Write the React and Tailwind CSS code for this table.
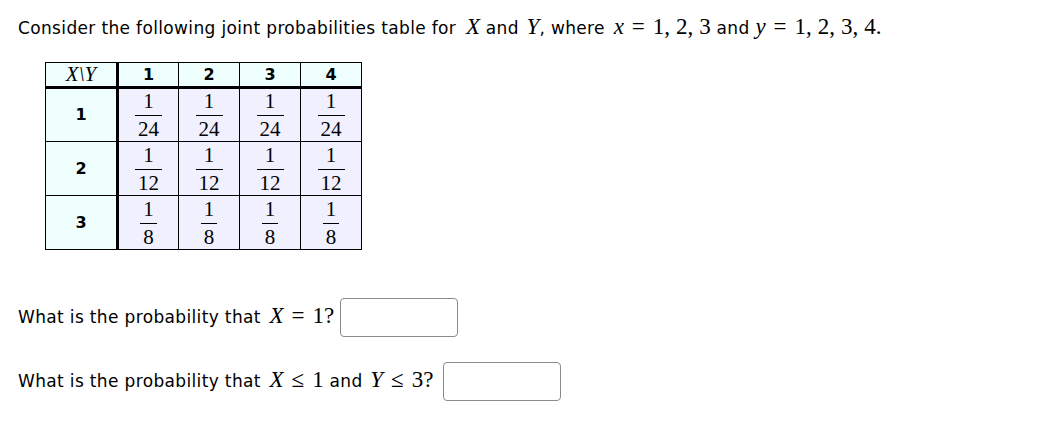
import React from 'react';

const serif = "font-['Liberation_Serif','DejaVu_Serif',serif]";

const Var = ({ children, className = '' }) => (
  <span className={`${serif} italic text-[23px] leading-none tracking-normal ${className}`}>{children}</span>
);

// math run: relations get MathJax-like spacing, commas a thin space
const Rel = ({ children }) => (
  <span className={`${serif} text-[23px] leading-none tracking-normal mx-[8px]`}>{children}</span>
);

const List = ({ items, end = '' }) => (
  <span className={`${serif} text-[23px] leading-none tracking-normal`}>
    {items.map((n, i) => (
      <span key={i}>
        {n}
        {i < items.length - 1 ? <span className="mr-[6px]">,</span> : null}
      </span>
    ))}
    {end}
  </span>
);

const Frac = ({ den }) => (
  <span className={`${serif} inline-flex flex-col items-center text-[21px] leading-[21px]`}>
    <span>1</span>
    <span className="h-px w-full bg-black my-[3px]" />
    <span className="px-[3px]">{den}</span>
  </span>
);

const rows = [
  { x: 1, den: '24' },
  { x: 2, den: '12' },
  { x: 3, den: '8' },
];

export default function App() {
  return (
    <div className="w-[1043px] h-[430px] bg-white text-black font-['DejaVu_Sans','Verdana',sans-serif] text-[17px] tracking-[0.35px] pl-[18px] pt-[15px]">
      {/* ── PROMPT ─────────────────────────────────────────── */}
      <p className="h-[26px] leading-[26px] whitespace-nowrap">
        Consider the following joint probabilities table for <Var className="ml-[4px]">X</Var> and{' '}
        <Var className="ml-[2px]">Y</Var>, where <Var className="ml-[3px]">x</Var>
        <Rel>=</Rel>
        <List items={['1', '2', '3']} /> and <Var>y</Var>
        <Rel>=</Rel>
        <List items={['1', '2', '3', '4']} end="." />
      </p>

      {/* ── TABLE ──────────────────────────────────────────── */}
      <table className="ml-[27px] mt-[21px] border-collapse border border-black tracking-normal">
        <thead>
          <tr className="h-[25px] bg-[#effffe] border-b-[3px] border-black">
            <th className="w-[72px] border-r-[3px] border-black p-0 font-normal leading-[22px]">
              <span className={`${serif} italic text-[21px]`}>X\Y</span>
            </th>
            {[1, 2, 3, 4].map((y) => (
              <th key={y} className="w-[61px] border border-black p-0 text-[16px] leading-[22px] font-bold">
                {y}
              </th>
            ))}
          </tr>
        </thead>
        <tbody>
          {rows.map((r) => (
            <tr key={r.x} className="h-[54px]">
              <td className="bg-[#effffe] border border-black border-r-[3px] text-center text-[16px] font-bold p-0">
                {r.x}
              </td>
              {[1, 2, 3, 4].map((y) => (
                <td key={y} className="bg-[#f1f0fe] border border-black text-center p-0 align-middle">
                  <Frac den={r.den} />
                </td>
              ))}
            </tr>
          ))}
        </tbody>
      </table>

      {/* ── QUESTIONS ──────────────────────────────────────── */}
      <div className="mt-[48px] flex items-center h-[38px] whitespace-nowrap">
        <span>
          What is the probability that <Var className="ml-[3px]">X</Var>
          <Rel>=</Rel>
          <List items={['1']} end="?" />
        </span>
        <input className="ml-[6px] w-[118px] h-[39px] border border-[#8a8a8a] rounded-[4px] bg-white" />
      </div>
      <div className="mt-[26px] flex items-center h-[39px] whitespace-nowrap">
        <span>
          What is the probability that <Var className="ml-[3px]">X</Var>
          <Rel>≤</Rel>
          <List items={['1']} /> and <Var className="ml-[2px]">Y</Var>
          <Rel>≤</Rel>
          <List items={['3']} end="?" />
        </span>
        <input className="ml-[10px] w-[118px] h-[39px] border border-[#8a8a8a] rounded-[4px] bg-white" />
      </div>
    </div>
  );
}
